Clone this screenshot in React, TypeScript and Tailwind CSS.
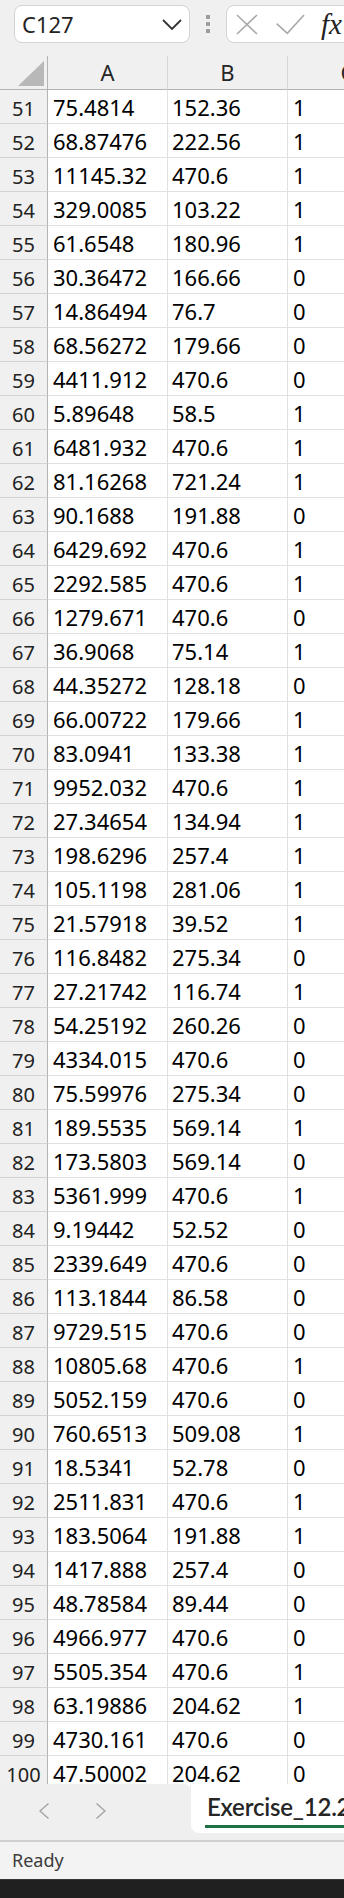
import React from "react";

type Row = [number, string, string, string];

const rows: Row[] = [
  [51, "75.4814", "152.36", "1"],
  [52, "68.87476", "222.56", "1"],
  [53, "11145.32", "470.6", "1"],
  [54, "329.0085", "103.22", "1"],
  [55, "61.6548", "180.96", "1"],
  [56, "30.36472", "166.66", "0"],
  [57, "14.86494", "76.7", "0"],
  [58, "68.56272", "179.66", "0"],
  [59, "4411.912", "470.6", "0"],
  [60, "5.89648", "58.5", "1"],
  [61, "6481.932", "470.6", "1"],
  [62, "81.16268", "721.24", "1"],
  [63, "90.1688", "191.88", "0"],
  [64, "6429.692", "470.6", "1"],
  [65, "2292.585", "470.6", "1"],
  [66, "1279.671", "470.6", "0"],
  [67, "36.9068", "75.14", "1"],
  [68, "44.35272", "128.18", "0"],
  [69, "66.00722", "179.66", "1"],
  [70, "83.0941", "133.38", "1"],
  [71, "9952.032", "470.6", "1"],
  [72, "27.34654", "134.94", "1"],
  [73, "198.6296", "257.4", "1"],
  [74, "105.1198", "281.06", "1"],
  [75, "21.57918", "39.52", "1"],
  [76, "116.8482", "275.34", "0"],
  [77, "27.21742", "116.74", "1"],
  [78, "54.25192", "260.26", "0"],
  [79, "4334.015", "470.6", "0"],
  [80, "75.59976", "275.34", "0"],
  [81, "189.5535", "569.14", "1"],
  [82, "173.5803", "569.14", "0"],
  [83, "5361.999", "470.6", "1"],
  [84, "9.19442", "52.52", "0"],
  [85, "2339.649", "470.6", "0"],
  [86, "113.1844", "86.58", "0"],
  [87, "9729.515", "470.6", "0"],
  [88, "10805.68", "470.6", "1"],
  [89, "5052.159", "470.6", "0"],
  [90, "760.6513", "509.08", "1"],
  [91, "18.5341", "52.78", "0"],
  [92, "2511.831", "470.6", "1"],
  [93, "183.5064", "191.88", "1"],
  [94, "1417.888", "257.4", "0"],
  [95, "48.78584", "89.44", "0"],
  [96, "4966.977", "470.6", "0"],
  [97, "5505.354", "470.6", "1"],
  [98, "63.19886", "204.62", "1"],
  [99, "4730.161", "470.6", "0"],
  [100, "47.50002", "204.62", "0"],
];

function FormulaBar() {
  return (
    <div className="h-[56px] shrink-0 flex items-start pt-[5px] pl-[14px]">
      <div className="w-[176px] h-[38px] shrink-0 rounded-[8px] bg-white border border-[#d4d4d4] flex items-center justify-between pl-[7px] pr-[7px]">
        <span className="text-[22px] leading-[30px] text-[#242424]">C127</span>
        <svg width="20" height="11" viewBox="0 0 20 11" fill="none">
          <polyline points="1,1 10,10 19,1" stroke="#333" strokeWidth="1.8" />
        </svg>
      </div>
      <div className="ml-[16px] mt-[10px] flex flex-col gap-[3px]">
        <div className="w-[4px] h-[4px] bg-[#9c9c9c]" />
        <div className="w-[4px] h-[4px] bg-[#9c9c9c]" />
        <div className="w-[4px] h-[4px] bg-[#9c9c9c]" />
      </div>
      <div className="ml-[16px] w-[200px] h-[38px] shrink-0 rounded-[8px] bg-white border border-[#d4d4d4] flex items-center pl-[9px]">
        <svg width="22" height="21" viewBox="0 0 22 21" fill="none">
          <line x1="1" y1="1" x2="21" y2="20" stroke="#a9a9a9" strokeWidth="1.6" />
          <line x1="21" y1="1" x2="1" y2="20" stroke="#a9a9a9" strokeWidth="1.6" />
        </svg>
        <svg className="ml-[18px]" width="29" height="21" viewBox="0 0 29 21" fill="none">
          <polyline points="0.7,9.7 11.3,19.3 28,1" stroke="#a9a9a9" strokeWidth="1.6" />
        </svg>
        <span className="ml-[16px] font-['Liberation_Serif',serif] italic text-[29px] leading-[30px] text-[#222]">
          fx
        </span>
      </div>
    </div>
  );
}

function Grid() {
  return (
    <div className="h-[1728px] shrink-0 overflow-hidden bg-white">
      <div className="flex h-[34px] bg-[#f0f0f0]">
        <div className="w-[48px] shrink-0 border-r border-b border-[#b4b4b4] flex items-end justify-end pr-[3px] pb-[3px]">
          <svg width="26" height="25" viewBox="0 0 26 25">
            <polygon points="26,0 26,25 0,25" fill="#b8b8b8" />
          </svg>
        </div>
        {["A", "B", "C"].map((c) => (
          <div
            key={c}
            className="w-[120px] shrink-0 border-r border-r-[#d6d6d6] border-b border-b-[#b4b4b4] text-center text-[22px] leading-[33px] text-[#262626]"
          >
            {c}
          </div>
        ))}
      </div>
      {rows.map(([n, a, b, c]) => (
        <div key={n} className="flex h-[34px]">
          <div className="w-[48px] shrink-0 bg-[#f0f0f0] border-r border-r-[#b4b4b4] border-b border-b-[#d3d3d3] text-center text-[20px] leading-[33px] pt-[2px] text-[#222]">
            {n}
          </div>
          <div className="w-[120px] shrink-0 border-r border-b border-[#e1e1e1] pl-[5px] pt-[1px] text-[22px] leading-[33px] text-black">
            {a}
          </div>
          <div className="w-[120px] shrink-0 border-r border-b border-[#e1e1e1] pl-[4px] pt-[1px] text-[22px] leading-[33px] text-black">
            {b}
          </div>
          <div className="w-[120px] shrink-0 border-r border-b border-[#e1e1e1] pl-[5px] pt-[1px] text-[22px] leading-[33px] text-black">
            {c}
          </div>
        </div>
      ))}
    </div>
  );
}

function SheetTabs() {
  return (
    <div className="h-[56px] shrink-0 flex bg-white">
      <div className="w-[190px] shrink-0 bg-[#efefef] rounded-tr-[6px] flex items-start pt-[19px] pl-[39px]">
        <svg width="10" height="16" viewBox="0 0 10 16" fill="none">
          <polyline points="9.5,0.5 1,8 9.5,15.5" stroke="#a3a3a3" strokeWidth="1.4" />
        </svg>
        <svg className="ml-[47px]" width="10" height="16" viewBox="0 0 10 16" fill="none">
          <polyline points="0.5,0.5 9,8 0.5,15.5" stroke="#a3a3a3" strokeWidth="1.4" />
        </svg>
      </div>
      <div className="flex-1 flex flex-col bg-[#efefef] overflow-hidden">
        <div className="h-[49px] ml-[1px] bg-white rounded-bl-[8px] pl-[14px] pt-[10px] whitespace-nowrap">
          <div className="pl-[2px] font-['Lato',sans-serif] text-[24px] leading-[26px] font-semibold tracking-[-0.2px] text-[#262626]">
            Exercise_12.2
          </div>
          <div className="mt-[5px] h-[3px] w-[300px] bg-[#1e7145]" />
        </div>
      </div>
    </div>
  );
}

export default function App() {
  return (
    <div className="w-[344px] h-[1898px] overflow-hidden flex flex-col bg-[#f0f0f0] font-['Noto_Sans','Open_Sans',sans-serif]">
      <FormulaBar />
      <Grid />
      <SheetTabs />
      <div className="h-[2px] shrink-0 bg-[#d0d0d0]" />
      <div className="h-[37px] shrink-0 bg-[#f3f3f3] pl-[12px] text-[18px] leading-[37px] text-[#3b3b3b]">
        Ready
      </div>
      <div className="flex-1 bg-[#202020] border-t border-[#353535]" />
    </div>
  );
}
